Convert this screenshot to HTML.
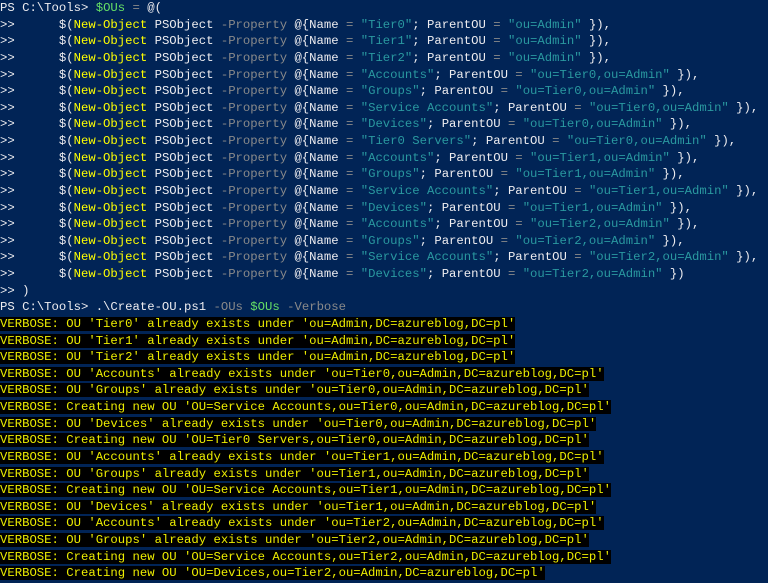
<!DOCTYPE html>
<html><head><meta charset="utf-8"><style>
html,body{margin:0;padding:0;background:#012456;width:768px;height:583px;overflow:hidden}
pre{margin:0;padding:0 0 0 0;font-family:"Liberation Mono",monospace;font-size:12.28px;line-height:16.62px;color:#eeedf0;white-space:pre}
.y{color:#ffff00}.g{color:#8a8a8a}.s{color:#2a99a0}.v{color:#66e066}
.vb{background:#000;color:#eded00}
</style></head><body><pre>PS C:\Tools&gt; <span class="v">$OUs</span> <span class="g">=</span> @(
&gt;&gt;      $(<span class="y">New-Object</span> PSObject <span class="g">-Property</span> @{Name <span class="g">=</span> <span class="s">"Tier0"</span>; ParentOU <span class="g">=</span> <span class="s">"ou=Admin"</span> }),
&gt;&gt;      $(<span class="y">New-Object</span> PSObject <span class="g">-Property</span> @{Name <span class="g">=</span> <span class="s">"Tier1"</span>; ParentOU <span class="g">=</span> <span class="s">"ou=Admin"</span> }),
&gt;&gt;      $(<span class="y">New-Object</span> PSObject <span class="g">-Property</span> @{Name <span class="g">=</span> <span class="s">"Tier2"</span>; ParentOU <span class="g">=</span> <span class="s">"ou=Admin"</span> }),
&gt;&gt;      $(<span class="y">New-Object</span> PSObject <span class="g">-Property</span> @{Name <span class="g">=</span> <span class="s">"Accounts"</span>; ParentOU <span class="g">=</span> <span class="s">"ou=Tier0,ou=Admin"</span> }),
&gt;&gt;      $(<span class="y">New-Object</span> PSObject <span class="g">-Property</span> @{Name <span class="g">=</span> <span class="s">"Groups"</span>; ParentOU <span class="g">=</span> <span class="s">"ou=Tier0,ou=Admin"</span> }),
&gt;&gt;      $(<span class="y">New-Object</span> PSObject <span class="g">-Property</span> @{Name <span class="g">=</span> <span class="s">"Service Accounts"</span>; ParentOU <span class="g">=</span> <span class="s">"ou=Tier0,ou=Admin"</span> }),
&gt;&gt;      $(<span class="y">New-Object</span> PSObject <span class="g">-Property</span> @{Name <span class="g">=</span> <span class="s">"Devices"</span>; ParentOU <span class="g">=</span> <span class="s">"ou=Tier0,ou=Admin"</span> }),
&gt;&gt;      $(<span class="y">New-Object</span> PSObject <span class="g">-Property</span> @{Name <span class="g">=</span> <span class="s">"Tier0 Servers"</span>; ParentOU <span class="g">=</span> <span class="s">"ou=Tier0,ou=Admin"</span> }),
&gt;&gt;      $(<span class="y">New-Object</span> PSObject <span class="g">-Property</span> @{Name <span class="g">=</span> <span class="s">"Accounts"</span>; ParentOU <span class="g">=</span> <span class="s">"ou=Tier1,ou=Admin"</span> }),
&gt;&gt;      $(<span class="y">New-Object</span> PSObject <span class="g">-Property</span> @{Name <span class="g">=</span> <span class="s">"Groups"</span>; ParentOU <span class="g">=</span> <span class="s">"ou=Tier1,ou=Admin"</span> }),
&gt;&gt;      $(<span class="y">New-Object</span> PSObject <span class="g">-Property</span> @{Name <span class="g">=</span> <span class="s">"Service Accounts"</span>; ParentOU <span class="g">=</span> <span class="s">"ou=Tier1,ou=Admin"</span> }),
&gt;&gt;      $(<span class="y">New-Object</span> PSObject <span class="g">-Property</span> @{Name <span class="g">=</span> <span class="s">"Devices"</span>; ParentOU <span class="g">=</span> <span class="s">"ou=Tier1,ou=Admin"</span> }),
&gt;&gt;      $(<span class="y">New-Object</span> PSObject <span class="g">-Property</span> @{Name <span class="g">=</span> <span class="s">"Accounts"</span>; ParentOU <span class="g">=</span> <span class="s">"ou=Tier2,ou=Admin"</span> }),
&gt;&gt;      $(<span class="y">New-Object</span> PSObject <span class="g">-Property</span> @{Name <span class="g">=</span> <span class="s">"Groups"</span>; ParentOU <span class="g">=</span> <span class="s">"ou=Tier2,ou=Admin"</span> }),
&gt;&gt;      $(<span class="y">New-Object</span> PSObject <span class="g">-Property</span> @{Name <span class="g">=</span> <span class="s">"Service Accounts"</span>; ParentOU <span class="g">=</span> <span class="s">"ou=Tier2,ou=Admin"</span> }),
&gt;&gt;      $(<span class="y">New-Object</span> PSObject <span class="g">-Property</span> @{Name <span class="g">=</span> <span class="s">"Devices"</span>; ParentOU <span class="g">=</span> <span class="s">"ou=Tier2,ou=Admin"</span> })
&gt;&gt; )
PS C:\Tools&gt; .\Create-OU.ps1 <span class="g">-OUs</span> <span class="v">$OUs</span> <span class="g">-Verbose</span>
<span class="vb">VERBOSE: OU 'Tier0' already exists under 'ou=Admin,DC=azureblog,DC=pl'</span>
<span class="vb">VERBOSE: OU 'Tier1' already exists under 'ou=Admin,DC=azureblog,DC=pl'</span>
<span class="vb">VERBOSE: OU 'Tier2' already exists under 'ou=Admin,DC=azureblog,DC=pl'</span>
<span class="vb">VERBOSE: OU 'Accounts' already exists under 'ou=Tier0,ou=Admin,DC=azureblog,DC=pl'</span>
<span class="vb">VERBOSE: OU 'Groups' already exists under 'ou=Tier0,ou=Admin,DC=azureblog,DC=pl'</span>
<span class="vb">VERBOSE: Creating new OU 'OU=Service Accounts,ou=Tier0,ou=Admin,DC=azureblog,DC=pl'</span>
<span class="vb">VERBOSE: OU 'Devices' already exists under 'ou=Tier0,ou=Admin,DC=azureblog,DC=pl'</span>
<span class="vb">VERBOSE: Creating new OU 'OU=Tier0 Servers,ou=Tier0,ou=Admin,DC=azureblog,DC=pl'</span>
<span class="vb">VERBOSE: OU 'Accounts' already exists under 'ou=Tier1,ou=Admin,DC=azureblog,DC=pl'</span>
<span class="vb">VERBOSE: OU 'Groups' already exists under 'ou=Tier1,ou=Admin,DC=azureblog,DC=pl'</span>
<span class="vb">VERBOSE: Creating new OU 'OU=Service Accounts,ou=Tier1,ou=Admin,DC=azureblog,DC=pl'</span>
<span class="vb">VERBOSE: OU 'Devices' already exists under 'ou=Tier1,ou=Admin,DC=azureblog,DC=pl'</span>
<span class="vb">VERBOSE: OU 'Accounts' already exists under 'ou=Tier2,ou=Admin,DC=azureblog,DC=pl'</span>
<span class="vb">VERBOSE: OU 'Groups' already exists under 'ou=Tier2,ou=Admin,DC=azureblog,DC=pl'</span>
<span class="vb">VERBOSE: Creating new OU 'OU=Service Accounts,ou=Tier2,ou=Admin,DC=azureblog,DC=pl'</span>
<span class="vb">VERBOSE: Creating new OU 'OU=Devices,ou=Tier2,ou=Admin,DC=azureblog,DC=pl'</span></pre></body></html>
